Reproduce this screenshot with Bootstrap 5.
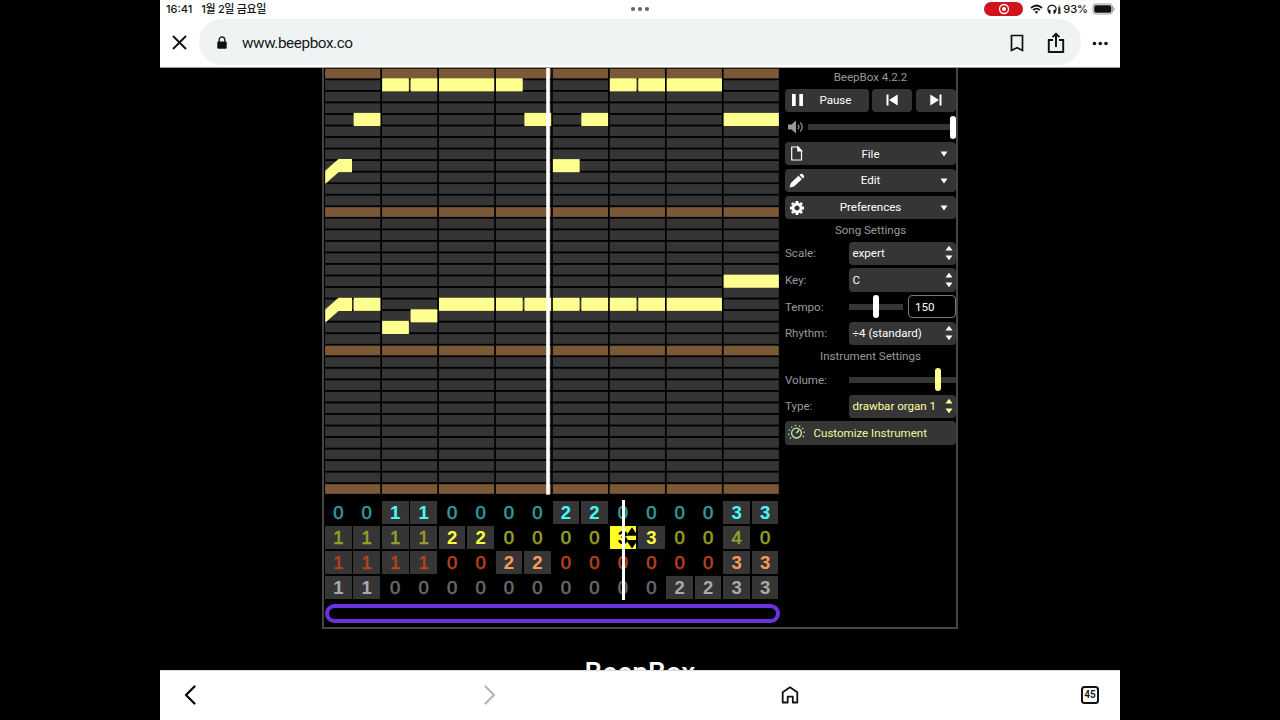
<!DOCTYPE html>
<html lang="ko">
<head>
<meta charset="utf-8">
<meta name="viewport" content="width=device-width, initial-scale=1">
<title>BeepBox</title>
<link href="https://cdn.jsdelivr.net/npm/bootstrap@5.3.0/dist/css/bootstrap.min.css" rel="stylesheet">
<style>
  body { background:#000; font-family:Roboto,"Noto Sans CJK KR",sans-serif; overflow:hidden; }
  svg { display:block; flex:none; }
  .tablet { width:960px; height:720px; background:#fff; }
  .statusbar { height:19px; padding:0 4px 1px 6px; font:500 11px/17px Inter,"Noto Sans CJK KR",sans-serif; color:#111; }
  .statusbar .day { margin-left:9px; letter-spacing:-.35px; }
  .rec { width:39px; height:14px; border-radius:7px; background:#d0141c; }
  .toolbar { height:49px; border-bottom:1.5px solid #9a9c9e; }
  .address { width:882px; height:46px; border-radius:23px; background:#eff3f4; margin-left:12px; padding:0 16px 0 17px; }
  .address span { font-size:15.3px; color:#16191b; letter-spacing:-.42px; }
  .page { height:602px; background:#000; }
  .editor { width:636px; height:561px; border:2px solid #444; border-top:0; }
  .song { width:456px; }
  .tracks { display:grid; grid-template-columns:repeat(16,26.6px); grid-auto-rows:23.2px; gap:1.8px 1.86px; margin:6.3px 0 0 1px; }
  .tracks div { font:18.5px/24px "Liberation Sans",sans-serif; text-align:center; -webkit-text-stroke:.6px currentColor; }
  .tracks .lit { font-weight:bold; -webkit-text-stroke:0; }
  .filled { background:#353535; }
  .picked { background:#ffff25; color:#000; }
  .seek { top:432px; left:297.5px; width:3.6px; height:100px; background:#fff; }
  .updown { left:302px; top:459px; }
  .loop { width:455px; height:18.4px; border:4px solid #6a33de; border-radius:10px; margin:5px 0 0 1px; }
  .side { width:171px; margin-left:5px; padding-top:1.3px; gap:3.5px; font-size:11.6px; letter-spacing:-.03px; line-height:16px; color:#999; }
  .side > * { flex:none; }
  .line { height:23.2px; }
  .ctl { height:23.2px; background:#353535; border-radius:4px; color:#fff; }
  .label { width:64px; }
  .rail { height:6px; background:#353535; }
  .knob { width:6px; height:23px; border-radius:3px; background:#fff; top:-8.5px; }
  .tempo { width:48px; height:23.2px; border:1px solid #777; border-radius:4px; color:#fff; padding-left:6px; }
  .organ { color:#ffffa0; }
  .custom { color:#e6ff9a; }
  .headline { font-size:28px; line-height:36px; color:#fff; font-weight:500; margin-top:25.5px; }
  .bottombar { height:50px; border-top:1px solid #ddd; padding:0 21px 2px 23px; }
  .tabs45 { width:18px; height:18px; border:2px solid #111; border-radius:3.5px; font:600 10px/14px Roboto,sans-serif; color:#111; text-align:center; }
</style>
</head>
<body>
<div class="tablet mx-auto d-flex flex-column overflow-hidden">
  <div class="statusbar d-flex align-items-center position-relative">
    <span>16:41</span><span class="day">1월 2일 금요일</span>
    <svg class="position-absolute" style="left:470px;top:6px" width="20" height="6" fill="#666"><circle cx="3" cy="3" r="2.1"/><circle cx="10" cy="3" r="2.1"/><circle cx="17" cy="3" r="2.1"/></svg>
    <div class="ms-auto d-flex align-items-center">
      <div class="rec d-flex align-items-center justify-content-center"><svg width="12" height="12" fill="none" stroke="#fff"><circle cx="6" cy="6" r="4.5" stroke-width="1.3"/><circle cx="6" cy="6" r="2" fill="#fff" stroke="none"/></svg></div>
      <svg style="margin-left:7px" width="13" height="10" viewBox="0 0 13 10" fill="none" stroke="#111" stroke-width="1.7"><path d="M1 4Q6.5-1 12 4M3.1 6.2Q6.5 3.2 9.9 6.2"/><path d="M4.7 7.7 6.5 9.7 8.3 7.7Q6.5 6.4 4.7 7.7Z" fill="#111" stroke="none"/></svg>
      <svg style="margin-left:4px" width="15" height="11" viewBox="0 0 15 11" fill="none" stroke="#111" stroke-width="1.200"><path d="M2 8.500C-.300 4.500 1.500 1.200 5 1.200s5.300 3.300 3 7.300"/><path d="M2.700 5.800v4M7.300 5.800v4" stroke-width="1.600"/><path d="M12.300 3.200v6.800" stroke="#333" stroke-width="2.300"/><path d="M12.300 1.500v1.200" stroke="#555"/></svg>
      <span style="margin-left:1px">93%</span>
      <svg style="margin-left:4px" width="24" height="12" viewBox="0 0 24 12"><rect x="1" y="1" width="19.500" height="10" rx="3" fill="none" stroke="#999"/><rect x="2.200" y="2.200" width="17.200" height="7.600" rx="1.700" fill="#111"/><path d="M21.800 4.200q1.600 1.800 0 3.600z" fill="#999" stroke="#999" stroke-width=".500"/></svg>
    </div>
  </div>
  <div class="toolbar d-flex align-items-start">
    <svg style="margin:16px 0 0 12px" width="15" height="15" stroke="#111" stroke-width="1.900"><path d="M1 1 14 14M14 1 1 14"/></svg>
    <div class="address d-flex align-items-center">
      <svg style="margin-top:1px" width="12" height="14" viewBox="0 0 12 14"><path d="M3.200 6V3.800a2.800 2.800 0 0 1 5.600 0V6" fill="none" stroke="#222" stroke-width="1.400"/><rect x="1.300" y="5.500" width="9.400" height="7.300" rx="1.200" fill="#111"/></svg>
      <span style="margin-left:14px;margin-top:2px">www.beepbox.co</span>
      <svg class="ms-auto" style="margin-top:1px" width="14" height="18" fill="none" stroke="#111" stroke-width="1.700"><path d="M1.500 1.500h11v15L7 13.800 1.500 16.500z"/></svg>
      <svg style="margin-left:23px;margin-top:1px" width="18" height="22" viewBox="0 0 18 22" fill="none" stroke="#111" stroke-width="1.900"><path d="M6 8H1.800v12h14.400V8H12M9 15V2M5.600 5.200 9 1.800l3.400 3.400"/></svg>
    </div>
    <svg style="margin:21.500px 0 0 11px" width="17" height="5" fill="#111"><circle cx="2.500" cy="2.500" r="1.800"/><circle cx="8.300" cy="2.500" r="1.800"/><circle cx="14" cy="2.500" r="1.800"/></svg>
  </div>

  <div class="page overflow-hidden">
    <div class="editor mx-auto d-flex">
      <div class="song position-relative">
        <svg id="roll" width="456" height="427" viewBox="324 68 456 427"></svg>
        <div class="tracks" id="tracks"></div>
        <div class="seek position-absolute"></div>
        <svg class="updown position-absolute" width="12" height="22" viewBox="0 0 12 22"><path d="M.200 8.700 6 .300l5.800 8.400zM.200 13l5.800 8.500L11.800 13z" fill="#000"/></svg>
        <div class="loop"></div>
      </div>
      <div class="side d-flex flex-column">
        <div class="text-center">BeepBox 4.2.2</div>
        <div class="line d-flex">
          <div class="ctl d-flex align-items-center" style="width:83.500px">
            <svg style="margin-left:7px" width="12" height="14" fill="#fff"><path d="M0 1h3.700v12H0zM7.300 1H11v12H7.300z"/></svg><span style="margin-left:15.500px">Pause</span>
          </div>
          <div class="ctl d-flex align-items-center justify-content-center" style="width:40px;margin-left:3.500px"><svg width="12" height="12" fill="#fff"><path d="M.500.500h2v11h-2zM11.700.500v11L3 6z"/></svg></div>
          <div class="ctl d-flex align-items-center justify-content-center" style="width:40px;margin-left:4px"><svg width="12" height="12" fill="#fff"><path d="M9.500.500h2v11h-2zM.300.500v11L9 6z"/></svg></div>
        </div>
        <div class="line d-flex align-items-center">
          <svg style="margin-left:3px" width="17" height="14" viewBox="0 0 17 14"><path d="M0 4.500h3.500L8 .500v13l-4.500-4H0z" fill="#999"/><path d="M10 4.800q1.700 2.200 0 4.400M12.300 2.500q3.800 4.500 0 9" fill="none" stroke="#888" stroke-width="1.400"/></svg>
          <div class="rail position-relative flex-grow-1" style="margin-left:3px"><div class="knob position-absolute" style="right:0"></div></div>
        </div>
        <div class="ctl d-flex align-items-center position-relative">
          <svg class="position-absolute" style="left:6px;top:4px" width="12" height="15" fill="none" stroke="#fff" stroke-width="1.200"><path d="M.700 1H7l3.500 3.700V14H.700z"/><path d="M6.800 1v4h3.700z" fill="#fff"/></svg>
          <span class="mx-auto">File</span><svg class="position-absolute" style="right:8px;top:9px" width="8" height="6"><path d="M.500.500h7l-3.500 5z" fill="#fff"/></svg>
        </div>
        <div class="ctl d-flex align-items-center position-relative">
          <svg class="position-absolute" style="left:4px;top:4px" width="16" height="16" fill="#fff"><path d="M.500 14.500 1.800 10 9.500 2.800l3.300 3.400L5 13.500zM10.500 2l1-.900q1-.900 2 0l1.300 1.300q.900 1 0 2l-1 1z"/></svg>
          <span class="mx-auto">Edit</span><svg class="position-absolute" style="right:8px;top:9px" width="8" height="6"><path d="M.500.500h7l-3.500 5z" fill="#fff"/></svg>
        </div>
        <div class="ctl d-flex align-items-center position-relative">
          <svg class="position-absolute" style="left:4px;top:4px" width="16" height="16" viewBox="-8 -8 16 16" fill="none" stroke="#fff"><circle r="4" stroke-width="2.800"/><path d="M0-7V-5M0 5V7M-7 0H-5M5 0H7M-5-5-3.700-3.700M3.700 3.700 5 5M-5 5-3.700 3.700M3.700-3.700 5-5" stroke-width="2.900"/></svg>
          <span class="mx-auto">Preferences</span><svg class="position-absolute" style="right:8px;top:9px" width="8" height="6"><path d="M.500.500h7l-3.500 5z" fill="#fff"/></svg>
        </div>
        <div class="text-center">Song Settings</div>
        <div class="line d-flex align-items-center"><span class="label">Scale:</span><div class="ctl pick flex-grow-1 d-flex align-items-center">expert</div></div>
        <div class="line d-flex align-items-center"><span class="label">Key:</span><div class="ctl pick flex-grow-1 d-flex align-items-center">C</div></div>
        <div class="line d-flex align-items-center"><span class="label">Tempo:</span><div class="rail position-relative" style="width:54px"><div class="knob position-absolute" style="left:24px"></div></div><div class="tempo ms-auto d-flex align-items-center">150</div></div>
        <div class="line d-flex align-items-center"><span class="label">Rhythm:</span><div class="ctl pick flex-grow-1 d-flex align-items-center">÷4 (standard)</div></div>
        <div class="text-center">Instrument Settings</div>
        <div class="line d-flex align-items-center"><span class="label">Volume:</span><div class="rail position-relative flex-grow-1"><div class="knob position-absolute" style="left:86px;width:5.500px;background:#ffff90"></div></div></div>
        <div class="line d-flex align-items-center"><span class="label">Type:</span><div class="ctl pick organ flex-grow-1 d-flex align-items-center">drawbar organ 1</div></div>
        <div class="ctl custom d-flex align-items-center">
          <svg style="margin-left:3px" width="17" height="17" viewBox="-8.500 -8.500 17 17" fill="none" stroke="#c8eea0"><circle r="4.900" cy=".6" stroke-width="1.300"/><path d="M0 .6 2.500-2.500" stroke-width="1.500"/><path d="M-5.500 6A7.700 7.700 0 1 1 5.500 6" stroke="#9fe0a0" stroke-width="1.400" stroke-dasharray="1.400 2.600"/></svg>
          <span style="margin-left:8.500px">Customize Instrument</span>
        </div>
      </div>
    </div>
    <div class="headline text-center">BeepBox</div>
  </div>

  <div class="bottombar d-flex align-items-center justify-content-between">
    <svg width="14" height="20" fill="none" stroke="#000" stroke-width="2.200" stroke-linecap="round" stroke-linejoin="round"><path d="M11.500 1.500 3 10l8.500 8.500"/></svg>
    <svg style="margin-left:4px" width="14" height="20" fill="none" stroke="#b5b7b8" stroke-width="2.200" stroke-linecap="round" stroke-linejoin="round"><path d="M2.500 1.500 11 10l-8.500 8.500"/></svg>
    <svg style="margin-left:2px" width="18" height="18" fill="none" stroke="#111" stroke-width="1.800" stroke-linejoin="round"><path d="M1.700 6.300 9 1.300l7.300 5v10.200h-4.500v-5.800H6.700v5.800h-5z"/></svg>
    <div class="tabs45">45</div>
  </div>
</div>
<script src="https://cdn.jsdelivr.net/npm/bootstrap@5.3.0/dist/js/bootstrap.bundle.min.js"></script>
<script>
  // Piano roll: 37 pitch rows by 8 beats, octave rows in brown.
  let roll = '';
  for (let r = 0; r < 37; r++)
    for (let c = 0; c < 8; c++)
      roll += `<rect x="${325.1 + 56.93 * c}" y="${68.7 + 11.54 * r}" width="55.2" height="9.700" fill="${r % 12 ? '#353535' : '#7b5836'}"/>`;
  // Notes: [row, half-beat start, half-beats long]
  [[1,2,1],[1,3,1],[1,4,2],[1,6,1],[1,10,1],[1,11,1],[1,12,2],[4,1,1],[4,7,1],[4,9,1],[4,14,2],[8,8,1],
   [20,1,1],[20,4,2],[20,6,1],[20,7,1],[20,8,1],[20,9,1],[20,10,1],[20,11,1],[20,12,2],[22,2,1],[21,3,1],[18,14,2]]
    .forEach(([r, s, n]) => roll += `<rect x="${325.2 + 28.46 * s}" y="${66.7 + 11.55 * r}" width="${28.46 * n - 1.7}" height="13.200" fill="#ffff90"/>`);
  [159.1, 297.7].forEach(y => roll += `<path d="M325.200 ${y + 11.7}L338.500 ${y}H352V${y + 13.2}H338.500L325.200 ${y + 25}Z" fill="#ffff90"/>`);
  roll += '<rect x="546.200" y="68" width="3.600" height="426.700" fill="#fff"/>';
  document.getElementById('roll').innerHTML = roll;

  // Sequencer: digit per bar; box flags; dim and bright colour per channel.
  const channels = [
    ['0011000022000033', '0011000011000011', '0011000011000011', '#2f9d9a', '#4ff'],
    ['1111220000330040', '1111110000110010', '0000110000110000', '#97a02b', '#ffff40'],
    ['1111002200000033', '1111001100000011', '0000001100000011', '#b5431c', '#ff9a5a'],
    ['1100000000002233', '1100000000001111', '1100000000001111', '#696969', '#aaa']];
  document.getElementById('tracks').innerHTML = channels.map(([d, box, on, dim, bright], r) =>
    [...d].map((v, i) => r === 1 && i === 10 ? `<div class="picked lit">${v}</div>`
      : `<div class="${box[i] === '1' ? 'filled' : ''} ${on[i] === '1' ? 'lit' : ''}" style="color:${on[i] === '1' ? bright : dim}">${v}</div>`).join('')).join('');

  document.querySelectorAll('.pick').forEach(p => {
    p.style.paddingLeft = '3.500px';
    p.insertAdjacentHTML('beforeend', '<svg class="ms-auto me-1" style="margin-right:3px!important" width="8" height="16" fill="currentColor"><path d="M.500 5.500 4 .700l3.500 4.800zM.500 10.500 4 15.300l3.500-4.800z"/></svg>');
  });
</script>
</body>
</html>
